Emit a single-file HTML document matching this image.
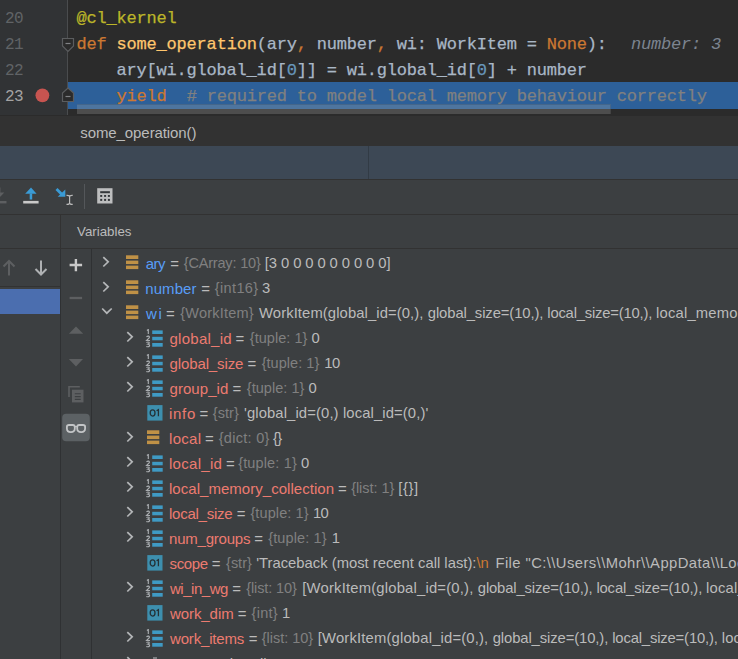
<!DOCTYPE html>
<html><head><meta charset="utf-8">
<style>
*{margin:0;padding:0;box-sizing:border-box}
html,body{width:738px;height:659px;overflow:hidden;background:#3C3F41}
body{position:relative;font-family:"Liberation Sans",sans-serif}
.abs{position:absolute}
#editor{left:0;top:0;width:738px;height:115px;background:#2B2B2B;overflow:hidden}
#gutter{left:0;top:0;width:67px;height:115px;background:#313335}
#gline{left:67px;top:0;width:1px;height:115px;background:#4A4C4E}
.ln{position:absolute;left:0;width:23px;text-align:right;font-family:"Liberation Mono",monospace;font-size:16px;letter-spacing:-0.6px;color:#606366;line-height:26px;height:26px;padding-top:2px}
.code{position:absolute;left:76.6px;font-family:"Liberation Mono",monospace;font-size:17px;letter-spacing:-0.2px;line-height:26px;height:26px;padding-top:2px;white-space:pre;color:#A9B7C6;-webkit-text-stroke:0.25px}
#exec{left:68px;top:82px;width:670px;height:27px;background:#2D6099}
.k{color:#CC7832}.f{color:#FFC66D}.d{color:#BBB529}.n{color:#6897BB}.c{color:#808080}.hint{color:#7C8490;font-style:italic;-webkit-text-stroke:0 !important}
#thumb{left:77px;top:104px;width:534px;height:10px;background:rgba(181,181,181,0.25);border:1px solid rgba(0,0,0,0.12);border-left:0;border-bottom:0}
#crumb{left:0;top:115px;width:738px;height:31px;background:#323232;border-top:1px solid #2B2B2B}
#crumb span{position:absolute;left:80.3px;top:8px;font-size:15px;letter-spacing:-0.09px;color:#BBBBBB}
#tabs{left:0;top:146px;width:738px;height:33px;background:#3D4855}
#tabdiv{left:368px;top:146px;width:1px;height:33px;background:#323B45}
#tline{left:0;top:179px;width:738px;height:1px;background:#323232}
#toolbar{left:0;top:180px;width:738px;height:34px;background:#3C3F41}
#hline1{left:0;top:214px;width:738px;height:1px;background:#323232}
#varhdr{left:0;top:215px;width:738px;height:33px;background:#3C3F41}
#varhdr span{position:absolute;left:77px;top:9px;font-size:13.3px;color:#BBBBBB}
#vdiv0{left:60px;top:214px;width:1px;height:34px;background:#323232}
#hline2{left:0;top:248px;width:738px;height:1px;background:#323232}
#frames{left:0;top:249px;width:61px;height:410px;background:#3C3F41}
#vdiv1{left:60px;top:249px;width:1px;height:410px;background:#2F3133}
#vdiv2{left:91px;top:249px;width:1px;height:410px;background:#2F3133}
#fsep{left:0;top:286px;width:60px;height:1px;background:#323232}
#fsel{left:0;top:289px;width:60px;height:25px;background:#4B6EAF}
.row{position:absolute;left:0;height:25px;width:738px;white-space:pre;font-size:14.8px;line-height:25px;color:#BBBBBB}
.row .t{position:absolute;top:0}.row span.t{top:1px}.row span.ty{font-size:14px}
.ico-f{position:absolute;top:5px;width:12px;height:14px;background:linear-gradient(#C19A4C 0 4px,transparent 4px 5.5px,#C19A4C 5.5px 9px,transparent 9px 10.5px,#C19A4C 10.5px 14px)}
.ico-l{position:absolute;left:146px;top:5px;width:17px;height:17px}
.ico-s{position:absolute;left:147px;top:5px;width:15px;height:15px;background:#3D8FAE;color:#28353B;font-size:9px;line-height:15px;text-align:center;font-weight:bold}
.nm{font-size:15px}.nm0{color:#589DF6}.nm1{color:#EC7B70}.ty{color:#808080}.eq{color:#BBBBBB}.esc{color:#CC7832}
</style></head><body>
<div id="editor" class="abs">
  <div id="gutter" class="abs"></div>
  <div id="exec" class="abs"></div>
  <div id="gline" class="abs"></div>
  <div class="ln" style="top:4px">20</div>
  <div class="ln" style="top:30px">21</div>
  <div class="ln" style="top:56px">22</div>
  <div class="ln" style="top:82px;color:#A4A3A3">23</div>
  <div class="code" style="top:4px"><span class="d">@cl_kernel</span></div>
  <div class="code" style="top:30px"><span class="k">def </span><span class="f">some_operation</span>(ary<span class="k">, </span>number<span class="k">, </span>wi: WorkItem = <span class="k">None</span>):</div>
  <div class="code hint" style="top:30px;left:631px">number: 3</div>
  <div class="code" style="top:56px">    ary[wi.global_id[<span class="n">0</span>]] = wi.global_id[<span class="n">0</span>] + number</div>
  <div class="code" style="top:82px">    <span class="k">yield</span>  <span class="c"># required to model local memory behaviour correctly</span></div>

  <svg class="abs" style="left:61px;top:37px" width="14" height="16"><path d="M1.5 1.5 H12.5 V9 L7 14.5 L1.5 9 Z" fill="#2B2B2B" stroke="#5B5D5F" stroke-width="1.2"/><path d="M4.5 6.5 H9.5" stroke="#808285" stroke-width="1.2"/></svg>
  <svg class="abs" style="left:61px;top:87px" width="14" height="16"><path d="M1.5 14.5 H12.5 V6 L7 1 L1.5 6 Z" fill="#2B2B2B" stroke="#5B5D5F" stroke-width="1.2"/><path d="M4.5 9.5 H9.5" stroke="#808285" stroke-width="1.2"/></svg>
  <svg class="abs" style="left:35px;top:88px" width="15" height="15"><circle cx="7.4" cy="7.3" r="6.9" fill="#C75450"/></svg>
  <div id="thumb" class="abs"></div>
</div>
<div id="crumb" class="abs"><span>some_operation()</span></div>
<div id="tabs" class="abs"></div>
<div id="tabdiv" class="abs"></div>
<div id="tline" class="abs"></div>
<div id="toolbar" class="abs">
  <svg class="abs" style="left:0;top:0" width="120" height="34">
    <rect x="-2.2" y="7.5" width="2.6" height="6" fill="#5D5F61"/>
    <path d="M-6.5 12.6 L4.3 12.6 L-1.1 18.2 Z" fill="#5D5F61"/>
    <rect x="-8" y="21" width="14.5" height="2.4" fill="#5D5F61"/>
    <path d="M31 7.6 L36.6 13.8 L25.2 13.8 Z" fill="#3A9BD5"/>
    <rect x="29.7" y="13.5" width="2.5" height="6" fill="#3A9BD5"/>
    <rect x="23.2" y="20.9" width="15.4" height="2.6" fill="#C9C9C9"/>
    <path d="M56.5 9 L62.5 15" stroke="#3A9BD5" stroke-width="2.8"/>
    <path d="M65.3 9.6 L65.3 16.7 L57.7 16.7 Z" fill="#3A9BD5"/>
    <path d="M66.5 15.4 Q69.5 15.2 69.6 16.6 Q69.7 15.2 72.7 15.4 M69.6 16.6 V23 M66.5 24.3 Q69.5 24.5 69.6 23 Q69.7 24.5 72.7 24.3" stroke="#BBBBBB" stroke-width="1.2" fill="none"/>
    <rect x="84" y="4" width="1" height="25" fill="#54575A"/>
    <rect x="97.2" y="8.2" width="15.3" height="15.3" fill="#BDBEBF"/>
    <g fill="#34373A"><rect x="100.2" y="11.2" width="9.7" height="2"/><rect x="100.2" y="15" width="2" height="1.9"/><rect x="104.1" y="15" width="2" height="1.9"/><rect x="107.9" y="15" width="2" height="1.9"/><rect x="100.2" y="18.9" width="2" height="2"/><rect x="104.1" y="18.9" width="2" height="2"/><rect x="107.9" y="18.9" width="2" height="2"/></g>
  </svg>
</div>
<div id="hline1" class="abs"></div>
<div id="varhdr" class="abs"><span>Variables</span></div>
<div id="vdiv0" class="abs"></div>
<div id="hline2" class="abs"></div>
<div id="frames" class="abs"></div>
<div id="fsep" class="abs"></div>
<div id="fsel" class="abs"></div>
<div id="vdiv1" class="abs"></div>
<svg class="abs" style="left:0;top:249px" width="92" height="200">
  <path d="M9 26.5 V12 M3.5 17.5 L9 12 L14.5 17.5" stroke="#5D5F61" stroke-width="2" fill="none"/>
  <path d="M41 11.5 V25.5 M35.5 20 L41 25.5 L46.5 20" stroke="#AFB1B3" stroke-width="2" fill="none"/>
  <path d="M69.6 16 H82.1 M75.9 9.9 V22.2" stroke="#C9C9C9" stroke-width="2.4" fill="none"/>
  <path d="M69.6 49 H82.1" stroke="#5D5F61" stroke-width="2.3" fill="none"/>
  <path d="M76 77.6 L83.2 84.7 L68.9 84.7 Z" fill="#5D5F61"/>
  <path d="M76 117.5 L83 110 L68.8 110 Z" fill="#5D5F61"/>
  <path d="M69 148 V137.8 H79.8" stroke="#5D5F61" stroke-width="1.6" fill="none"/>
  <rect x="72" y="140.7" width="11.5" height="12.7" fill="#5D5F61"/>
  <path d="M74.8 144.8 H80.7 M74.8 147.6 H80.7 M74.8 150.4 H80.7" stroke="#3C3F41" stroke-width="1.1"/>
  <rect x="62.2" y="164.7" width="27.6" height="27.6" rx="4" fill="#5C6164"/>
</svg>
<svg class="abs" style="left:62px;top:413px" width="28" height="28">
  <g fill="none" stroke="#C3C5C7" stroke-width="1.8"><path d="M4.9 13.8 Q4.9 12 7 12 H10.8 Q12.8 12 12.8 14 V15.6 Q12.8 19.1 8.85 19.1 Q4.9 19.1 4.9 15.6 Z"/><path d="M23.1 13.8 Q23.1 12 21 12 H17.2 Q15.2 12 15.2 14 V15.6 Q15.2 19.1 19.15 19.1 Q23.1 19.1 23.1 15.6 Z"/></g><path d="M12.8 13.6 H15.2" stroke="#C3C5C7" stroke-width="1.2"/>
</svg>
<div id="vdiv2" class="abs"></div>
<!--ROWS-->
<div class="row" style="top:250px"><svg class="t" style="left:102px;top:6px" width="9" height="13"><polyline points="1.3,1.1 6.2,5.8 1.3,10.5" fill="none" stroke="#B4B6B8" stroke-width="1.7"/></svg><svg class="t" style="left:126px;top:5px" width="13" height="15"><rect x="0" y="0.3" width="12.3" height="3.7" fill="#BF9146"/><rect x="0" y="5.6" width="12.3" height="3.5" fill="#BF9146"/><rect x="0" y="10.6" width="12.3" height="3.5" fill="#BF9146"/></svg><span class="t nm0" style="left:145.80px;font-size:15px;letter-spacing:-0.575px">ary</span><span class="t eq" style="left:170.25px;font-size:15px">=</span><span class="t ty" style="left:183.75px;font-size:14.5px;letter-spacing:-0.182px">{CArray: 10}</span><span class="t eq" style="left:264.80px;font-size:14.8px;letter-spacing:-0.090px">[3 0 0 0 0 0 0 0 0 0]</span></div>
<div class="row" style="top:275px"><svg class="t" style="left:102px;top:6px" width="9" height="13"><polyline points="1.3,1.1 6.2,5.8 1.3,10.5" fill="none" stroke="#B4B6B8" stroke-width="1.7"/></svg><svg class="t" style="left:126px;top:5px" width="13" height="15"><rect x="0" y="0.3" width="12.3" height="3.7" fill="#BF9146"/><rect x="0" y="5.6" width="12.3" height="3.5" fill="#BF9146"/><rect x="0" y="10.6" width="12.3" height="3.5" fill="#BF9146"/></svg><span class="t nm0" style="left:145.30px;font-size:15px;letter-spacing:0.070px">number</span><span class="t eq" style="left:201.35px;font-size:15px">=</span><span class="t ty" style="left:214.75px;font-size:14.5px;letter-spacing:0.375px">{int16}</span><span class="t eq" style="left:262.10px;font-size:14.8px;letter-spacing:0.000px">3</span></div>
<div class="row" style="top:300px"><svg class="t" style="left:101px;top:7px" width="13" height="9"><polyline points="1.2,1.5 5.8,6.2 10.7,1.5" fill="none" stroke="#B4B6B8" stroke-width="1.7"/></svg><svg class="t" style="left:126px;top:5px" width="13" height="15"><rect x="0" y="0.3" width="12.3" height="3.7" fill="#BF9146"/><rect x="0" y="5.6" width="12.3" height="3.5" fill="#BF9146"/><rect x="0" y="10.6" width="12.3" height="3.5" fill="#BF9146"/></svg><span class="t nm0" style="left:146.00px;font-size:15px;letter-spacing:1.750px">wi</span><span class="t eq" style="left:165.95px;font-size:15px">=</span><span class="t ty" style="left:180.25px;font-size:14.5px;letter-spacing:0.222px">{WorkItem}</span><span class="t eq" style="left:259.00px;font-size:14.8px;letter-spacing:0.101px">WorkItem(global_id=(0,), </span><span class="t eq" style="left:427.80px;font-size:14.8px;letter-spacing:-0.096px">global_size=(10,), </span><span class="t eq" style="left:547.30px;font-size:14.8px;letter-spacing:-0.198px">local_size=(10,), </span><span class="t eq" style="left:656.00px;font-size:14.8px;letter-spacing:0.190px">local_memory_collection=[{}])</span></div>
<div class="row" style="top:325px"><svg class="t" style="left:126px;top:6px" width="9" height="13"><polyline points="1.3,1.1 6.2,5.8 1.3,10.5" fill="none" stroke="#B4B6B8" stroke-width="1.7"/></svg><svg class="t" style="left:145px;top:4px" width="19" height="19"><g fill="none" stroke="#A9ADB0" stroke-width="1.15"><path d="M1.9 1.4 L3.3 0.5 V5"/><path d="M1.5 8 Q2.4 6.9 3.6 7.1 Q4.9 7.6 4.1 9 L1.6 11.5 H5"/><path d="M1.4 13.5 Q2.8 12.7 4 13.3 Q4.9 14.4 3 15.1 Q5 15.6 4.5 17 Q3.2 18.3 1.3 17.4"/></g><rect x="7.2" y="1.4" width="10.5" height="3.6" fill="#3F9AC4"/><rect x="7.2" y="7.8" width="10.5" height="3.5" fill="#3F9AC4"/><rect x="7.2" y="14" width="10.5" height="3.7" fill="#3F9AC4"/></svg><span class="t nm1" style="left:169.50px;font-size:15px;letter-spacing:0.262px">global_id</span><span class="t eq" style="left:235.45px;font-size:15px">=</span><span class="t ty" style="left:249.75px;font-size:14.5px;letter-spacing:0.050px">{tuple: 1}</span><span class="t eq" style="left:311.50px;font-size:14.8px;letter-spacing:0.000px">0</span></div>
<div class="row" style="top:350px"><svg class="t" style="left:126px;top:6px" width="9" height="13"><polyline points="1.3,1.1 6.2,5.8 1.3,10.5" fill="none" stroke="#B4B6B8" stroke-width="1.7"/></svg><svg class="t" style="left:145px;top:4px" width="19" height="19"><g fill="none" stroke="#A9ADB0" stroke-width="1.15"><path d="M1.9 1.4 L3.3 0.5 V5"/><path d="M1.5 8 Q2.4 6.9 3.6 7.1 Q4.9 7.6 4.1 9 L1.6 11.5 H5"/><path d="M1.4 13.5 Q2.8 12.7 4 13.3 Q4.9 14.4 3 15.1 Q5 15.6 4.5 17 Q3.2 18.3 1.3 17.4"/></g><rect x="7.2" y="1.4" width="10.5" height="3.6" fill="#3F9AC4"/><rect x="7.2" y="7.8" width="10.5" height="3.5" fill="#3F9AC4"/><rect x="7.2" y="14" width="10.5" height="3.7" fill="#3F9AC4"/></svg><span class="t nm1" style="left:169.50px;font-size:15px;letter-spacing:-0.110px">global_size</span><span class="t eq" style="left:247.45px;font-size:15px">=</span><span class="t ty" style="left:261.65px;font-size:14.5px;letter-spacing:0.039px">{tuple: 1}</span><span class="t eq" style="left:324.30px;font-size:14.8px;letter-spacing:-0.500px">10</span></div>
<div class="row" style="top:375px"><svg class="t" style="left:126px;top:6px" width="9" height="13"><polyline points="1.3,1.1 6.2,5.8 1.3,10.5" fill="none" stroke="#B4B6B8" stroke-width="1.7"/></svg><svg class="t" style="left:145px;top:4px" width="19" height="19"><g fill="none" stroke="#A9ADB0" stroke-width="1.15"><path d="M1.9 1.4 L3.3 0.5 V5"/><path d="M1.5 8 Q2.4 6.9 3.6 7.1 Q4.9 7.6 4.1 9 L1.6 11.5 H5"/><path d="M1.4 13.5 Q2.8 12.7 4 13.3 Q4.9 14.4 3 15.1 Q5 15.6 4.5 17 Q3.2 18.3 1.3 17.4"/></g><rect x="7.2" y="1.4" width="10.5" height="3.6" fill="#3F9AC4"/><rect x="7.2" y="7.8" width="10.5" height="3.5" fill="#3F9AC4"/><rect x="7.2" y="14" width="10.5" height="3.7" fill="#3F9AC4"/></svg><span class="t nm1" style="left:169.50px;font-size:15px;letter-spacing:0.057px">group_id</span><span class="t eq" style="left:232.45px;font-size:15px">=</span><span class="t ty" style="left:246.75px;font-size:14.5px;letter-spacing:0.050px">{tuple: 1}</span><span class="t eq" style="left:308.50px;font-size:14.8px;letter-spacing:0.000px">0</span></div>
<div class="row" style="top:400px"><svg class="t" style="left:147px;top:5px" width="16" height="16"><rect x="0.3" y="0.1" width="15.2" height="15.5" fill="#3D8FAE"/><ellipse cx="5.6" cy="8" rx="2.4" ry="3.1" fill="none" stroke="#243238" stroke-width="1.3"/><path d="M9.6 5.8 L11.4 4.6 L11.4 11.3" fill="none" stroke="#243238" stroke-width="1.3"/></svg><span class="t nm1" style="left:169.00px;font-size:15px;letter-spacing:0.700px">info</span><span class="t eq" style="left:199.55px;font-size:15px">=</span><span class="t ty" style="left:212.75px;font-size:14.5px;letter-spacing:0.062px">{str}</span><span class="t eq" style="left:243.95px;font-size:14.8px;letter-spacing:0.122px">&#39;global_id=(0,) local_id=(0,)&#39;</span></div>
<div class="row" style="top:425px"><svg class="t" style="left:126px;top:6px" width="9" height="13"><polyline points="1.3,1.1 6.2,5.8 1.3,10.5" fill="none" stroke="#B4B6B8" stroke-width="1.7"/></svg><svg class="t" style="left:147px;top:5px" width="13" height="15"><rect x="0" y="0.3" width="12.3" height="3.7" fill="#BF9146"/><rect x="0" y="5.6" width="12.3" height="3.5" fill="#BF9146"/><rect x="0" y="10.6" width="12.3" height="3.5" fill="#BF9146"/></svg><span class="t nm1" style="left:169.00px;font-size:15px;letter-spacing:0.312px">local</span><span class="t eq" style="left:204.95px;font-size:15px">=</span><span class="t ty" style="left:218.75px;font-size:14.5px;letter-spacing:0.281px">{dict: 0}</span><span class="t eq" style="left:273.05px;font-size:14.8px;letter-spacing:-0.800px">{}</span></div>
<div class="row" style="top:450px"><svg class="t" style="left:126px;top:6px" width="9" height="13"><polyline points="1.3,1.1 6.2,5.8 1.3,10.5" fill="none" stroke="#B4B6B8" stroke-width="1.7"/></svg><svg class="t" style="left:145px;top:4px" width="19" height="19"><g fill="none" stroke="#A9ADB0" stroke-width="1.15"><path d="M1.9 1.4 L3.3 0.5 V5"/><path d="M1.5 8 Q2.4 6.9 3.6 7.1 Q4.9 7.6 4.1 9 L1.6 11.5 H5"/><path d="M1.4 13.5 Q2.8 12.7 4 13.3 Q4.9 14.4 3 15.1 Q5 15.6 4.5 17 Q3.2 18.3 1.3 17.4"/></g><rect x="7.2" y="1.4" width="10.5" height="3.6" fill="#3F9AC4"/><rect x="7.2" y="7.8" width="10.5" height="3.5" fill="#3F9AC4"/><rect x="7.2" y="14" width="10.5" height="3.7" fill="#3F9AC4"/></svg><span class="t nm1" style="left:169.00px;font-size:15px;letter-spacing:0.286px">local_id</span><span class="t eq" style="left:225.95px;font-size:15px">=</span><span class="t ty" style="left:238.15px;font-size:14.5px;letter-spacing:0.150px">{tuple: 1}</span><span class="t eq" style="left:300.90px;font-size:14.8px;letter-spacing:0.000px">0</span></div>
<div class="row" style="top:475px"><svg class="t" style="left:126px;top:6px" width="9" height="13"><polyline points="1.3,1.1 6.2,5.8 1.3,10.5" fill="none" stroke="#B4B6B8" stroke-width="1.7"/></svg><svg class="t" style="left:145px;top:4px" width="19" height="19"><g fill="none" stroke="#A9ADB0" stroke-width="1.15"><path d="M1.9 1.4 L3.3 0.5 V5"/><path d="M1.5 8 Q2.4 6.9 3.6 7.1 Q4.9 7.6 4.1 9 L1.6 11.5 H5"/><path d="M1.4 13.5 Q2.8 12.7 4 13.3 Q4.9 14.4 3 15.1 Q5 15.6 4.5 17 Q3.2 18.3 1.3 17.4"/></g><rect x="7.2" y="1.4" width="10.5" height="3.6" fill="#3F9AC4"/><rect x="7.2" y="7.8" width="10.5" height="3.5" fill="#3F9AC4"/><rect x="7.2" y="14" width="10.5" height="3.7" fill="#3F9AC4"/></svg><span class="t nm1" style="left:169.00px;font-size:15px;letter-spacing:0.034px">local_memory_collection</span><span class="t eq" style="left:337.95px;font-size:15px">=</span><span class="t ty" style="left:351.15px;font-size:14.5px;letter-spacing:-0.050px">{list: 1}</span><span class="t eq" style="left:398.30px;font-size:14.8px;letter-spacing:0.567px">[{}]</span></div>
<div class="row" style="top:500px"><svg class="t" style="left:126px;top:6px" width="9" height="13"><polyline points="1.3,1.1 6.2,5.8 1.3,10.5" fill="none" stroke="#B4B6B8" stroke-width="1.7"/></svg><svg class="t" style="left:145px;top:4px" width="19" height="19"><g fill="none" stroke="#A9ADB0" stroke-width="1.15"><path d="M1.9 1.4 L3.3 0.5 V5"/><path d="M1.5 8 Q2.4 6.9 3.6 7.1 Q4.9 7.6 4.1 9 L1.6 11.5 H5"/><path d="M1.4 13.5 Q2.8 12.7 4 13.3 Q4.9 14.4 3 15.1 Q5 15.6 4.5 17 Q3.2 18.3 1.3 17.4"/></g><rect x="7.2" y="1.4" width="10.5" height="3.6" fill="#3F9AC4"/><rect x="7.2" y="7.8" width="10.5" height="3.5" fill="#3F9AC4"/><rect x="7.2" y="14" width="10.5" height="3.7" fill="#3F9AC4"/></svg><span class="t nm1" style="left:169.00px;font-size:15px;letter-spacing:-0.250px">local_size</span><span class="t eq" style="left:236.85px;font-size:15px">=</span><span class="t ty" style="left:250.45px;font-size:14.5px;letter-spacing:0.094px">{tuple: 1}</span><span class="t eq" style="left:313.10px;font-size:14.8px;letter-spacing:-0.800px">10</span></div>
<div class="row" style="top:525px"><svg class="t" style="left:126px;top:6px" width="9" height="13"><polyline points="1.3,1.1 6.2,5.8 1.3,10.5" fill="none" stroke="#B4B6B8" stroke-width="1.7"/></svg><svg class="t" style="left:145px;top:4px" width="19" height="19"><g fill="none" stroke="#A9ADB0" stroke-width="1.15"><path d="M1.9 1.4 L3.3 0.5 V5"/><path d="M1.5 8 Q2.4 6.9 3.6 7.1 Q4.9 7.6 4.1 9 L1.6 11.5 H5"/><path d="M1.4 13.5 Q2.8 12.7 4 13.3 Q4.9 14.4 3 15.1 Q5 15.6 4.5 17 Q3.2 18.3 1.3 17.4"/></g><rect x="7.2" y="1.4" width="10.5" height="3.6" fill="#3F9AC4"/><rect x="7.2" y="7.8" width="10.5" height="3.5" fill="#3F9AC4"/><rect x="7.2" y="14" width="10.5" height="3.7" fill="#3F9AC4"/></svg><span class="t nm1" style="left:169.00px;font-size:15px;letter-spacing:-0.217px">num_groups</span><span class="t eq" style="left:254.25px;font-size:15px">=</span><span class="t ty" style="left:268.25px;font-size:14.5px;letter-spacing:0.117px">{tuple: 1}</span><span class="t eq" style="left:331.70px;font-size:14.8px;letter-spacing:0.000px">1</span></div>
<div class="row" style="top:550px"><svg class="t" style="left:147px;top:5px" width="16" height="16"><rect x="0.3" y="0.1" width="15.2" height="15.5" fill="#3D8FAE"/><ellipse cx="5.6" cy="8" rx="2.4" ry="3.1" fill="none" stroke="#243238" stroke-width="1.3"/><path d="M9.6 5.8 L11.4 4.6 L11.4 11.3" fill="none" stroke="#243238" stroke-width="1.3"/></svg><span class="t nm1" style="left:169.50px;font-size:15px;letter-spacing:-0.350px">scope</span><span class="t eq" style="left:211.65px;font-size:15px">=</span><span class="t ty" style="left:226.05px;font-size:14.5px;letter-spacing:-0.013px">{str}</span><span class="t eq" style="left:256.25px;font-size:14.8px;letter-spacing:0.000px">&#39;Traceback (most recent call last):<span class="esc">\n</span></span><span class="t eq" style="left:495.45px;font-size:14.8px;letter-spacing:0.42px">File "C:\\Users\\Mohr\\AppData\\Local\\Temp</span></div>
<div class="row" style="top:575px"><svg class="t" style="left:126px;top:6px" width="9" height="13"><polyline points="1.3,1.1 6.2,5.8 1.3,10.5" fill="none" stroke="#B4B6B8" stroke-width="1.7"/></svg><svg class="t" style="left:145px;top:4px" width="19" height="19"><g fill="none" stroke="#A9ADB0" stroke-width="1.15"><path d="M1.9 1.4 L3.3 0.5 V5"/><path d="M1.5 8 Q2.4 6.9 3.6 7.1 Q4.9 7.6 4.1 9 L1.6 11.5 H5"/><path d="M1.4 13.5 Q2.8 12.7 4 13.3 Q4.9 14.4 3 15.1 Q5 15.6 4.5 17 Q3.2 18.3 1.3 17.4"/></g><rect x="7.2" y="1.4" width="10.5" height="3.6" fill="#3F9AC4"/><rect x="7.2" y="7.8" width="10.5" height="3.5" fill="#3F9AC4"/><rect x="7.2" y="14" width="10.5" height="3.7" fill="#3F9AC4"/></svg><span class="t nm1" style="left:170.00px;font-size:15px;letter-spacing:-0.479px">wi_in_wg</span><span class="t eq" style="left:232.35px;font-size:15px">=</span><span class="t ty" style="left:246.25px;font-size:14.5px;letter-spacing:-0.111px">{list: 10}</span><span class="t eq" style="left:302.30px;font-size:14.8px;letter-spacing:0.197px">[WorkItem(global_id=(0,), </span><span class="t eq" style="left:477.80px;font-size:14.8px;letter-spacing:-0.144px">global_size=(10,), </span><span class="t eq" style="left:596.40px;font-size:14.8px;letter-spacing:-0.143px">local_size=(10,), </span><span class="t eq" style="left:706.10px;font-size:14.8px;letter-spacing:0.190px">local_memory_collection=[{}])]</span></div>
<div class="row" style="top:600px"><svg class="t" style="left:147px;top:5px" width="16" height="16"><rect x="0.3" y="0.1" width="15.2" height="15.5" fill="#3D8FAE"/><ellipse cx="5.6" cy="8" rx="2.4" ry="3.1" fill="none" stroke="#243238" stroke-width="1.3"/><path d="M9.6 5.8 L11.4 4.6 L11.4 11.3" fill="none" stroke="#243238" stroke-width="1.3"/></svg><span class="t nm1" style="left:170.00px;font-size:15px;letter-spacing:-0.079px">work_dim</span><span class="t eq" style="left:237.65px;font-size:15px">=</span><span class="t ty" style="left:251.55px;font-size:14.5px;letter-spacing:0.275px">{int}</span><span class="t eq" style="left:282.00px;font-size:14.8px;letter-spacing:0.000px">1</span></div>
<div class="row" style="top:625px"><svg class="t" style="left:126px;top:6px" width="9" height="13"><polyline points="1.3,1.1 6.2,5.8 1.3,10.5" fill="none" stroke="#B4B6B8" stroke-width="1.7"/></svg><svg class="t" style="left:145px;top:4px" width="19" height="19"><g fill="none" stroke="#A9ADB0" stroke-width="1.15"><path d="M1.9 1.4 L3.3 0.5 V5"/><path d="M1.5 8 Q2.4 6.9 3.6 7.1 Q4.9 7.6 4.1 9 L1.6 11.5 H5"/><path d="M1.4 13.5 Q2.8 12.7 4 13.3 Q4.9 14.4 3 15.1 Q5 15.6 4.5 17 Q3.2 18.3 1.3 17.4"/></g><rect x="7.2" y="1.4" width="10.5" height="3.6" fill="#3F9AC4"/><rect x="7.2" y="7.8" width="10.5" height="3.5" fill="#3F9AC4"/><rect x="7.2" y="14" width="10.5" height="3.7" fill="#3F9AC4"/></svg><span class="t nm1" style="left:170.00px;font-size:15px;letter-spacing:-0.172px">work_items</span><span class="t eq" style="left:248.65px;font-size:15px">=</span><span class="t ty" style="left:261.75px;font-size:14.5px;letter-spacing:-0.022px">{list: 10}</span><span class="t eq" style="left:317.80px;font-size:14.8px;letter-spacing:0.174px">[WorkItem(global_id=(0,), </span><span class="t eq" style="left:492.70px;font-size:14.8px;letter-spacing:-0.096px">global_size=(10,), </span><span class="t eq" style="left:612.20px;font-size:14.8px;letter-spacing:-0.154px">local_size=(10,), </span><span class="t eq" style="left:721.70px;font-size:14.8px;letter-spacing:0.190px">local_memory_collection=[{}])]</span></div>
<div class="row" style="top:650px"><svg class="t" style="left:126px;top:6px" width="9" height="13"><polyline points="1.3,1.1 6.2,5.8 1.3,10.5" fill="none" stroke="#B4B6B8" stroke-width="1.7"/></svg><svg class="t" style="left:150px;top:6px" width="10" height="5"><rect x="3" y="1" width="4" height="4" fill="#7A7D80"/></svg><span class="t eq" style="left:169px;font-size:15px">Protected Attributes</span></div>
<!--/ROWS-->
</body></html>
